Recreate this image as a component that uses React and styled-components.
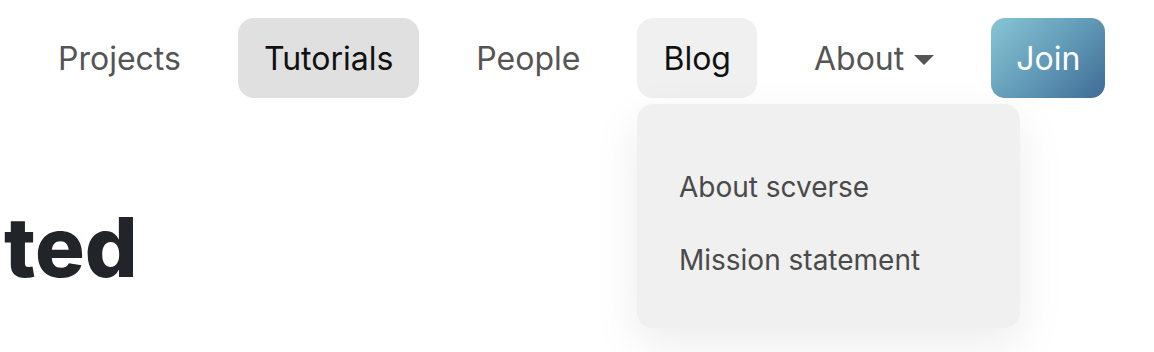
import React from "react";
import styled, { createGlobalStyle } from "styled-components";

const Global = createGlobalStyle`
  html, body { margin: 0; padding: 0; background: #fff; }
  body { font-family: Inter, "Noto Sans", sans-serif; overflow: hidden; }
`;

const Page = styled.div`
  width: 1154px;
  height: 352px;
  position: relative;
  overflow: hidden;
`;

const Nav = styled.nav`
  display: flex;
  align-items: center;
  gap: 31px;
  padding: 18px 0 0 32px;
`;

const NavItem = styled.div`
  position: relative;
  display: flex;
  align-items: center;
  gap: 10px;
  height: 80px;
  padding: 0 26px;
  box-sizing: border-box;
  border-radius: 16px;
  font-size: 32px;
  color: ${(p) => (p.$active ? "#111" : "#555")};
  background: ${(p) => p.$bg || "transparent"};
`;

const JoinButton = styled.div`
  display: flex;
  align-items: center;
  height: 80px;
  padding: 0 25px;
  box-sizing: border-box;
  border-radius: 14px;
  font-size: 32px;
  color: #fff;
  background: linear-gradient(135deg, #88c6d5 0%, #5f97b5 55%, #3e6b95 100%);
`;

const Caret = styled.span`
  width: 0;
  height: 0;
  border-left: 10px solid transparent;
  border-right: 10px solid transparent;
  border-top: 10px solid #555;
  margin-top: 4px;
`;

const Dropdown = styled.div`
  position: absolute;
  left: -151px;
  top: 86px;
  width: 383px;
  height: 224px;
  box-sizing: border-box;
  padding: 46px 42px 32px;
  background: #f0f0f0;
  border-radius: 16px;
  box-shadow: 0 16px 48px rgba(0, 0, 0, 0.08);
  z-index: 2;
`;

const DropItem = styled.div`
  height: 73px;
  display: flex;
  align-items: center;
  font-size: 28px;
  color: #4a4a4a;
  white-space: nowrap;
`;

const Heading = styled.h1`
  margin: 108px 0 0 0;
  padding-left: 4px;
  font-size: 83px;
  font-weight: 800;
  color: #212529;
  line-height: 1;
`;

export default function App() {
  return (
    <Page>
      <Global />
      <Nav>
        <NavItem>Projects</NavItem>
        <NavItem $active $bg="#e0e0e0">Tutorials</NavItem>
        <NavItem>People</NavItem>
        <NavItem $active $bg="#f0f0f0">Blog</NavItem>
        <NavItem>
          About <Caret />
          <Dropdown>
            <DropItem>About scverse</DropItem>
            <DropItem>Mission statement</DropItem>
          </Dropdown>
        </NavItem>
        <JoinButton>Join</JoinButton>
      </Nav>
      <Heading>ted</Heading>
    </Page>
  );
}
